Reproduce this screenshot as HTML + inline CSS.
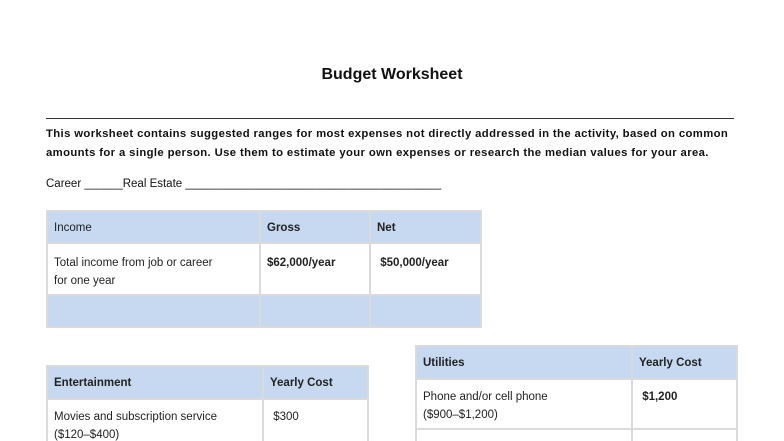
<!DOCTYPE html>
<html><head><meta charset="utf-8"><style>
html{overflow:hidden}
body{margin:0;width:784px;height:441px;background:#fff;position:relative;overflow:hidden;font-family:"Liberation Sans",sans-serif;color:#111}
.a{position:absolute;white-space:nowrap}
.c{position:absolute;box-sizing:border-box;border:2px solid #dadada;font-size:11.5px;padding:0 6px;color:#222}
.h{background:#c6d9f1}
</style></head><body>
<div class="a" style="left:0;width:784px;text-align:center;top:66px;font-size:16px;font-weight:bold">Budget Worksheet</div>
<div class="a" style="left:46px;top:118px;width:688px;height:1px;background:#333"></div>
<div class="a" style="left:46px;top:125px;font-size:11.3px;font-weight:bold;line-height:19px;letter-spacing:0.38px">This worksheet contains suggested ranges for most expenses not directly addressed in the activity, based on common<br>amounts for a single person. Use them to estimate your own expenses or research the median values for your area.</div>
<div class="a" style="left:46px;top:178px;font-size:11.5px">Career ______Real Estate ________________________________________</div>

<div class="c h" style="left:46px;top:210px;width:215px;height:34px;line-height:32px">Income</div>
<div class="c h" style="left:259px;top:210px;width:112px;height:34px;line-height:32px;font-weight:bold">Gross</div>
<div class="c h" style="left:369px;top:210px;width:113px;height:34px;line-height:32px;font-weight:bold">Net</div>
<div class="c" style="left:46px;top:242px;width:215px;height:54px;padding-top:10px;line-height:18px">Total income from job or career<br>for one year</div>
<div class="c" style="left:259px;top:242px;width:112px;height:54px;padding-top:10px;line-height:18px;font-weight:bold">$62,000/year</div>
<div class="c" style="left:369px;top:242px;width:113px;height:54px;padding-top:10px;line-height:18px;font-weight:bold">&nbsp;$50,000/year</div>
<div class="c h" style="left:46px;top:294px;width:215px;height:34px"></div>
<div class="c h" style="left:259px;top:294px;width:112px;height:34px"></div>
<div class="c h" style="left:369px;top:294px;width:113px;height:34px"></div>

<div class="c h" style="left:46px;top:365px;width:218px;height:35px;line-height:33px;font-weight:bold">Entertainment</div>
<div class="c h" style="left:262px;top:365px;width:107px;height:35px;line-height:33px;font-weight:bold">Yearly Cost</div>
<div class="c" style="left:46px;top:398px;width:218px;height:60px;padding-top:8px;line-height:18px">Movies and subscription service<br>($120–$400)</div>
<div class="c" style="left:262px;top:398px;width:107px;height:60px;padding-top:8px;line-height:18px">&nbsp;$300</div>

<div class="c h" style="left:415px;top:345px;width:218px;height:35px;line-height:33px;font-weight:bold">Utilities</div>
<div class="c h" style="left:631px;top:345px;width:107px;height:35px;line-height:33px;font-weight:bold">Yearly Cost</div>
<div class="c" style="left:415px;top:378px;width:218px;height:52px;padding-top:8px;line-height:18px">Phone and/or cell phone<br>($900–$1,200)</div>
<div class="c" style="left:631px;top:378px;width:107px;height:52px;padding-top:8px;line-height:18px;font-weight:bold">&nbsp;$1,200</div>
<div class="c" style="left:415px;top:428px;width:218px;height:30px"></div>
<div class="c" style="left:631px;top:428px;width:107px;height:30px"></div>
</body></html>
